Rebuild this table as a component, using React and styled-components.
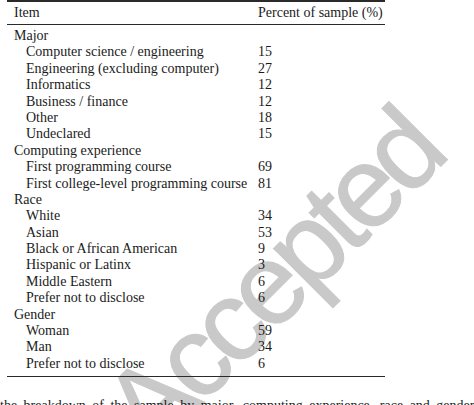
import React from "react";
import styled, { createGlobalStyle } from "styled-components";

const GlobalStyle = createGlobalStyle`
  html, body {
    margin: 0;
    padding: 0;
    background: #fff;
  }
  body {
    font-family: "Liberation Serif", "Times New Roman", serif;
    color: #1b1b1b;
  }
`;

const rows = [
  { label: "Major", group: true },
  { label: "Computer science / engineering", value: "15" },
  { label: "Engineering (excluding computer)", value: "27" },
  { label: "Informatics", value: "12" },
  { label: "Business / finance", value: "12" },
  { label: "Other", value: "18" },
  { label: "Undeclared", value: "15" },
  { label: "Computing experience", group: true },
  { label: "First programming course", value: "69" },
  { label: "First college-level programming course", value: "81" },
  { label: "Race", group: true },
  { label: "White", value: "34" },
  { label: "Asian", value: "53" },
  { label: "Black or African American", value: "9" },
  { label: "Hispanic or Latinx", value: "3" },
  { label: "Middle Eastern", value: "6" },
  { label: "Prefer not to disclose", value: "6" },
  { label: "Gender", group: true },
  { label: "Woman", value: "59" },
  { label: "Man", value: "34" },
  { label: "Prefer not to disclose", value: "6" },
];

function App() {
  return (
    <>
      <GlobalStyle />
      <Page>
        <Watermark>Accepted</Watermark>
        <Table>
          <HeaderRow>
            <Cell>Item</Cell>
            <Cell>Percent of sample (%)</Cell>
          </HeaderRow>
          <Body>
            {rows.map((r, i) => (
              <Row key={i}>
                <Cell indent={!r.group}>{r.label}</Cell>
                <Cell>{r.value}</Cell>
              </Row>
            ))}
          </Body>
        </Table>
        <Caption>
          the breakdown of the sample by major, computing experience, race and gender of the
        </Caption>
      </Page>
    </>
  );
}

export default App;

const Page = styled.div`
  position: relative;
  width: 474px;
  height: 405px;
  overflow: hidden;
  padding: 0 7px;
  box-sizing: border-box;
`;

// watermark stamped diagonally across the page
const Watermark = styled.div`
  position: absolute;
  left: 272px;
  top: 280px;
  transform: translate(-50%, -50%) rotate(-45deg);
  font-family: "Liberation Sans", Arial, sans-serif;
  font-size: 114px;
  letter-spacing: -7px;
  line-height: 1;
  color: #c9c9c9;
  -webkit-text-stroke: 1px #c9c9c9;
  white-space: nowrap;
  pointer-events: none;
`;

const Table = styled.div`
  position: relative;
  width: 378px;
  border-top: 2px solid #2a2a2a;
  border-bottom: 1.5px solid #2a2a2a;
  font-size: 14px;
`;

const HeaderRow = styled.div`
  display: grid;
  grid-template-columns: 244px 1fr;
  align-items: center;
  height: 22px;
  border-bottom: 1px solid #2a2a2a;
`;

const Body = styled.div`
  padding: 3px 0 4px;
`;

const Row = styled.div`
  display: grid;
  grid-template-columns: 244px 1fr;
  line-height: 16.4px;
  height: 16.4px;
`;

const Cell = styled.div`
  padding-left: ${(p) => (p.indent ? "19px" : "7px")};
  white-space: nowrap;
`;

const Caption = styled.div`
  position: relative;
  margin: 21px 0 0 -7px;
  font-size: 14px;
  word-spacing: 3px;
  white-space: nowrap;
`;
